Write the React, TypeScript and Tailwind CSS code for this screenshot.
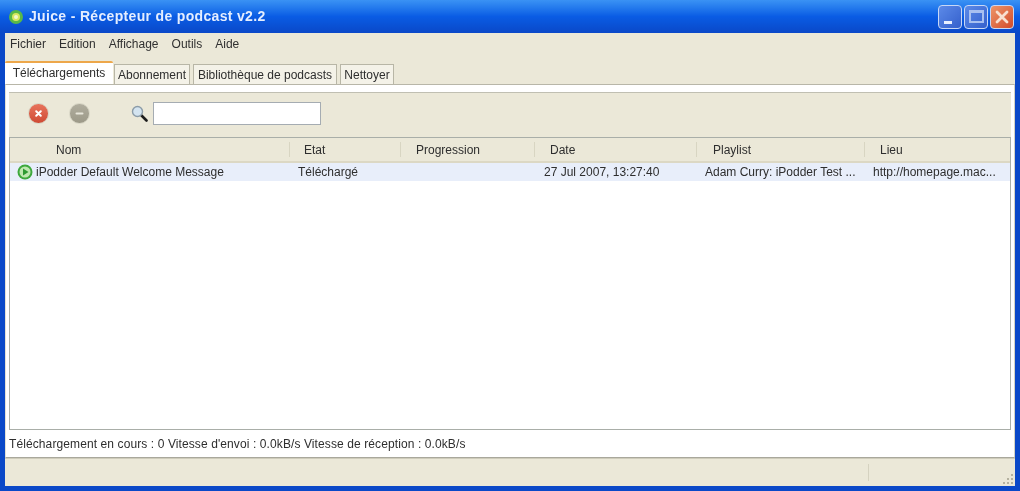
/* ── Data ──────────────────────────────────────────────────────── */
const MENU = ['Fichier', 'Edition', 'Affichage', 'Outils', 'Aide'];

const COLUMNS = [
  { label: 'Nom', cls: 'w-[280px] pl-[46px]' },
  { label: 'Etat', cls: 'w-[111px] pl-[14px]' },
  { label: 'Progression', cls: 'w-[134px] pl-[15px]' },
  { label: 'Date', cls: 'w-[162px] pl-[15px]' },
  { label: 'Playlist', cls: 'w-[168px] pl-[16px]' },
  { label: 'Lieu', cls: 'flex-1 pl-[15px]' },
];

const FONT = "font-['Liberation_Sans',Arial,sans-serif]";

/* ── Page ──────────────────────────────────────────────────────── */
export default function App() {
  return (
    <div className={`flex h-[491px] w-[1020px] flex-col overflow-hidden bg-[#0a48c8] text-[12px] text-[#2e2e2e] blur-[0.6px] ${FONT}`}>
      {/* Title bar */}
      <div className="flex h-[33px] shrink-0 items-center bg-gradient-to-b from-[#3a92f4] via-[#0a5ce4] to-[#0a48c8] pl-[9px] pr-[6px]">
        <AppIcon />
        <span className="ml-[6px] text-[14px] font-bold tracking-[0.33px] text-[#e4eeff]">Juice - Récepteur de podcast v2.2</span>
        <div className="ml-auto flex gap-[2px]">
          <WinButton><span className="mr-[4px] mt-[11px] h-[3px] w-[8px] bg-[#e8f0ff]" /></WinButton>
          <WinButton><span className="h-[13px] w-[15px] border-2 border-t-[3px] border-[#a8c0f0]" /></WinButton>
          <WinButton close>
            <svg width="14" height="14" viewBox="0 0 14 14" stroke="#f8e0d0" strokeWidth="2.8" strokeLinecap="round"><path d="M2 2l10 10M12 2L2 12" /></svg>
          </WinButton>
        </div>
      </div>

      {/* Client area */}
      <div className="mx-[5px] mb-[5px] flex min-h-0 flex-1 flex-col bg-[#ebe8d8]">
        {/* Menu */}
        <div className="flex h-[22px] shrink-0 items-center gap-[13px] pl-[5px] text-[#303030]">
          {MENU.map((m) => <span key={m}>{m}</span>)}
        </div>

        {/* Tabs */}
        <div className="mt-[6px] flex h-[23px] shrink-0 items-end">
          <div className="flex h-[23px] w-[108px] items-center justify-center rounded-t-[2px] border-t-2 border-[#eda74a] bg-white pb-[2px]">Téléchargements</div>
          <Tab w="ml-px w-[76px]">Abonnement</Tab>
          <Tab w="ml-[3px] w-[144px]">Bibliothèque de podcasts</Tab>
          <Tab w="ml-[3px] w-[54px]">Nettoyer</Tab>
        </div>

        {/* Panel */}
        <div className="flex min-h-0 flex-1 flex-col border border-b-[#a9a89c] border-l-[#e4e2d4] border-r-[#d4d2c4] border-t-[#b8b6a8] bg-white">
          <div className="flex min-h-0 flex-1 flex-col px-[3px]">
            <div className="mt-[7px] flex h-[45px] shrink-0 items-center border-t border-[#c0bfb2] bg-[#ebe8d8] pb-[3px] pl-[19px]">
              <RoundButton color="from-[#e8735c] to-[#cf4a34]"><path d="M3.2 3.2l4.6 4.6M7.8 3.2l-4.6 4.6" stroke="#fff" strokeWidth="2" strokeLinecap="round" /></RoundButton>
              <div className="ml-[20px]">
                <RoundButton color="from-[#b0ad9e] to-[#9c9988]"><path d="M2.5 5.5h6" stroke="#e8e6da" strokeWidth="2" strokeLinecap="round" /></RoundButton>
              </div>
              <div className="ml-[41px]"><MagnifierIcon /></div>
              <div className="ml-[5px] h-[23px] w-[168px] border border-[#a5acb2] bg-white" />
            </div>

            {/* Table */}
            <div className="flex min-h-0 flex-1 flex-col border border-[#a9aea8] bg-white">
              <div className="flex h-[25px] shrink-0 items-center border-b-2 border-[#dcd8c4] bg-[#ebe8d8]">
                {COLUMNS.map((c, i) => (
                  <div key={c.label} className={`flex h-[15px] items-center ${c.cls} ${i < 5 ? 'border-r border-[#d8d5c2]' : ''}`}>{c.label}</div>
                ))}
              </div>
              <div className="flex h-[18px] shrink-0 items-center bg-[#e8eefa]">
                <div className="flex w-[280px] items-center pl-[7px]">
                  <PlayIcon />
                  <span className="ml-[3px]">iPodder Default Welcome Message</span>
                </div>
                <div className="w-[111px] pl-[8px]">Téléchargé</div>
                <div className="w-[134px]" />
                <div className="w-[162px] pl-[9px]">27 Jul 2007, 13:27:40</div>
                <div className="w-[168px] pl-[8px]">Adam Curry: iPodder Test ...</div>
                <div className="flex-1 pl-[8px]">http://homepage.mac...</div>
              </div>
            </div>
          </div>

          {/* Status text */}
          <div className="flex h-[27px] shrink-0 items-center pl-[3px] tracking-[0.1px]">
            Téléchargement en cours : 0 Vitesse d'envoi : 0.0kB/s Vitesse de réception : 0.0kB/s
          </div>
        </div>

        {/* Status bar */}
        <div className="relative flex h-[28px] shrink-0 items-center justify-end border-t border-[#cfccbb]">
          <div className="mr-[146px] h-[17px] w-px bg-[#d5d2c0]" />
          <ResizeGrip />
        </div>
      </div>
    </div>
  );
}

/* ── Components ────────────────────────────────────────────────── */
function Tab({ w, children }: { w: string; children: string }) {
  return (
    <div className={`flex h-[20px] ${w} items-center justify-center border border-b-0 border-[#b8b6a6] bg-[#f4f2e8]`}>
      {children}
    </div>
  );
}

function WinButton({ close, children }: { close?: boolean; children: React.ReactNode }) {
  return (
    <div className={`flex h-[24px] w-[24px] items-center justify-center rounded-[4px] border border-[#c8d8f6] ${close ? 'bg-gradient-to-br from-[#ec9468] to-[#d24a2a]' : 'bg-gradient-to-br from-[#5c8ae8] to-[#3560cc]'}`}>
      {children}
    </div>
  );
}

function RoundButton({ color, children }: { color: string; children: React.ReactNode }) {
  return (
    <div className={`flex h-[21px] w-[21px] items-center justify-center rounded-full border border-[#d8d6c6] bg-gradient-to-b ${color}`}>
      <svg width="11" height="11" viewBox="0 0 11 11" fill="none">{children}</svg>
    </div>
  );
}

function AppIcon() {
  return (
    <svg width="14" height="14" viewBox="0 0 14 14">
      <circle cx="7" cy="7" r="7" fill="#58b848" />
      <circle cx="7" cy="7" r="4" fill="#d8e860" />
      <circle cx="7" cy="7" r="2" fill="#f4f8d0" />
    </svg>
  );
}

function PlayIcon() {
  return (
    <svg width="16" height="16" viewBox="0 0 16 16">
      <circle cx="8" cy="8" r="7.5" fill="#3ea83c" />
      <circle cx="8" cy="8" r="5.5" fill="#bfe8b0" />
      <path d="M6 4.5l5.5 3.5L6 11.5z" fill="#2f9a32" />
    </svg>
  );
}

function MagnifierIcon() {
  return (
    <svg width="17" height="17" viewBox="0 0 17 17" className="block">
      <path d="M10 10l5.5 5.5" stroke="#1c1c1c" strokeWidth="2.6" strokeLinecap="round" />
      <circle cx="6.5" cy="6.5" r="5" fill="#d4e4f0" stroke="#8c9ca8" strokeWidth="1.4" />
    </svg>
  );
}

function ResizeGrip() {
  return (
    <svg width="12" height="12" viewBox="0 0 12 12" className="absolute bottom-[1px] right-[1px]" fill="#b5b2a0">
      <rect x="9" y="1" width="2" height="2" />
      <rect x="5" y="5" width="2" height="2" />
      <rect x="9" y="5" width="2" height="2" />
      <rect x="1" y="9" width="2" height="2" />
      <rect x="5" y="9" width="2" height="2" />
      <rect x="9" y="9" width="2" height="2" />
    </svg>
  );
}
